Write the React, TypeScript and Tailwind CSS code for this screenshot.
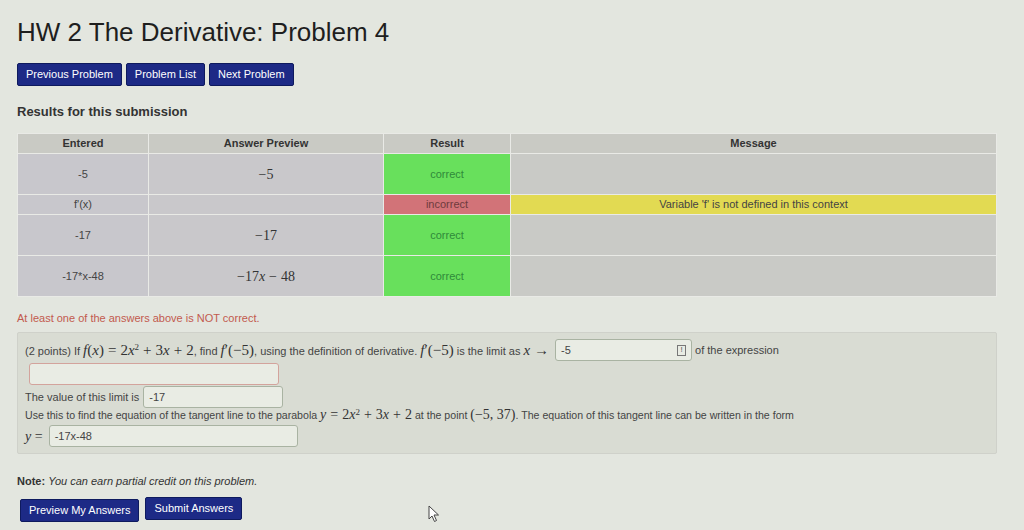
import React from "react";

const sans = { fontFamily: '"Liberation Sans", Arial, sans-serif' };
const serif = { fontFamily: '"Liberation Serif", "Times New Roman", serif' };

function V({ children }: { children: React.ReactNode }) {
  return <i className="italic">{children}</i>;
}

// math span, operators get their own spacing
function M({ children, className = "text-[14px]" }: { children: React.ReactNode; className?: string }) {
  return (
    <span className={`text-[#333] ${className}`} style={serif}>
      {children}
    </span>
  );
}

function Op({ c }: { c: string }) {
  return <span className="mx-[4px]">{c}</span>;
}

function NavButton({ label, className = "" }: { label: string; className?: string }) {
  return (
    <button className={`h-[23px] rounded-[2px] border border-[#0e1a5e] bg-[#1d2a86] px-[8px] text-[11px] text-white ${className}`}>
      {label}
    </button>
  );
}

function Field({ value, width, error, icon }: { value: string; width: string; error?: boolean; icon?: boolean }) {
  return (
    <div
      className={`flex h-[22px] shrink-0 items-center justify-between rounded-[3px] border bg-[#e9ece4] px-[5px] text-[11px] text-[#444] ${width} ${
        error ? "border-[#d3a39c]" : "border-[#a9b3a2]"
      }`}
    >
      <span>{value}</span>
      {icon && (
        <span className="flex h-[11px] w-[9px] items-center justify-center border border-[#777] text-[8px] leading-none text-[#555]">!</span>
      )}
    </div>
  );
}

const rows = [
  { entered: "-5", preview: <>−5</>, ok: true, msg: "", tall: true },
  { entered: "f'(x)", preview: null, ok: false, msg: "Variable 'f' is not defined in this context", tall: false },
  { entered: "-17", preview: <>−17</>, ok: true, msg: "", tall: true },
  { entered: "-17*x-48", preview: <>−17<V>x</V><Op c="−" />48</>, ok: true, msg: "", tall: true },
];

export default function App() {
  return (
    <div className="relative h-[530px] w-[1024px] overflow-hidden bg-[#e3e6df] px-[17px] text-[#333]" style={sans}>
      <h1 className="pt-[16px] text-[26px] leading-[32px] font-normal text-[#1e1e1e]">HW 2 The Derivative: Problem 4</h1>

      <div className="mt-[15px] flex gap-[4px]">
        <NavButton label="Previous Problem" />
        <NavButton label="Problem List" />
        <NavButton label="Next Problem" />
      </div>

      <h2 className="mt-[17px] text-[13px] leading-[18px] font-bold text-[#333]">Results for this submission</h2>

      <table className="mt-[12px] w-[980px] table-fixed border-collapse border border-[#a9aba6] text-[11px]">
        <colgroup>
          <col className="w-[131px]" />
          <col className="w-[235px]" />
          <col className="w-[127px]" />
          <col />
        </colgroup>
        <thead>
          <tr className="h-[20px] bg-[#c9cac4]">
            {["Entered", "Answer Preview", "Result", "Message"].map((h) => (
              <th key={h} className="border border-[#e9eae6] font-bold text-[#333]">
                {h}
              </th>
            ))}
          </tr>
        </thead>
        <tbody>
          {rows.map((r, i) => (
            <tr key={i} className={r.tall ? "h-[41px]" : "h-[20px]"}>
              <td className="border border-[#e9eae6] bg-[#c8c7cc] text-center text-[#444]">{r.entered}</td>
              <td className="border border-[#e9eae6] bg-[#c9c8cb] text-center">{r.preview && <M>{r.preview}</M>}</td>
              <td
                className={`border border-[#e9eae6] text-center ${
                  r.ok ? "bg-[#68e05c] text-[#2f8a3a]" : "bg-[#d27378] text-[#6e3b3d]"
                }`}
              >
                {r.ok ? "correct" : "incorrect"}
              </td>
              <td className={`border border-[#e9eae6] text-center text-[#444] ${r.msg ? "bg-[#e2da52]" : "bg-[#c9cac6]"}`}>{r.msg}</td>
            </tr>
          ))}
        </tbody>
      </table>

      <p className="mt-[14px] text-[11px] leading-[14px] text-[#c25a4e]">At least one of the answers above is NOT correct.</p>

      <div className="mt-[7px] w-[980px] rounded-[2px] border border-[#cfd1ca] bg-[#d9dcd3] px-[7px] pt-[6px] pb-[6px] text-[11px] text-[#444]">
        <div className="flex h-[22px] items-center whitespace-pre">
          <span className="leading-[16px]">
            (2 points) If{" "}
            <M className="text-[15px]">
              <V>f</V>(<V>x</V>)<Op c="=" />2<V>x</V>
              <sup className="text-[9px]">2</sup>
              <Op c="+" />3<V>x</V>
              <Op c="+" />2
            </M>
            , find{" "}
            <M className="text-[15px]">
              <V>f</V>′(−5)
            </M>
            , using the definition of derivative.{" "}
            <M className="text-[15px]">
              <V>f</V>′(−5)
            </M>{" "}
            is the limit as{" "}
            <M className="text-[15px]">
              <V>x</V> →
            </M>{"  "}
          </span>
          <Field value="-5" width="w-[137px]" icon />
          <span> of the expression</span>
        </div>
        <div className="mt-[2px] pl-[4px]">
          <Field value="" width="w-[250px]" error />
        </div>
        <div className="mt-[1px] flex h-[22px] items-center">
          <span className="mr-[4px]">The value of this limit is</span>
          <Field value="-17" width="w-[140px]" />
        </div>
        <div className="h-[14px] whitespace-pre text-[10.6px] leading-[14px]">
          Use this to find the equation of the tangent line to the parabola{" "}
          <M>
            <V>y</V>
            <Op c="=" />2<V>x</V>
            <sup className="text-[9px]">2</sup>
            <Op c="+" />3<V>x</V>
            <Op c="+" />2
          </M>{" "}
          at the point <M>(−5, 37)</M>. The equation of this tangent line can be written in the form
        </div>
        <div className="mt-[3px] flex h-[22px] items-center">
          <M className="mr-[6px] text-[14px]">
            <V>y</V> =
          </M>
          <Field value="-17x-48" width="w-[249px]" />
        </div>
      </div>

      <p className="mt-[20px] text-[11px] leading-[14px] text-[#333]">
        <b>Note:</b> <i>You can earn partial credit on this problem.</i>
      </p>

      <div className="mt-[11px] flex items-start gap-[6px] pl-[3px]">
        <NavButton label="Preview My Answers" />
        <NavButton label="Submit Answers" className="-mt-[2px]" />
      </div>

      <svg className="absolute left-[428px] top-[505px]" width="12" height="18" viewBox="0 0 12 18">
        <path d="M1 1 L1 14 L4 11 L6.5 16.5 L8.5 15.5 L6 10 L10.5 10 Z" fill="#fff" stroke="#444" strokeWidth="1" />
      </svg>
    </div>
  );
}
